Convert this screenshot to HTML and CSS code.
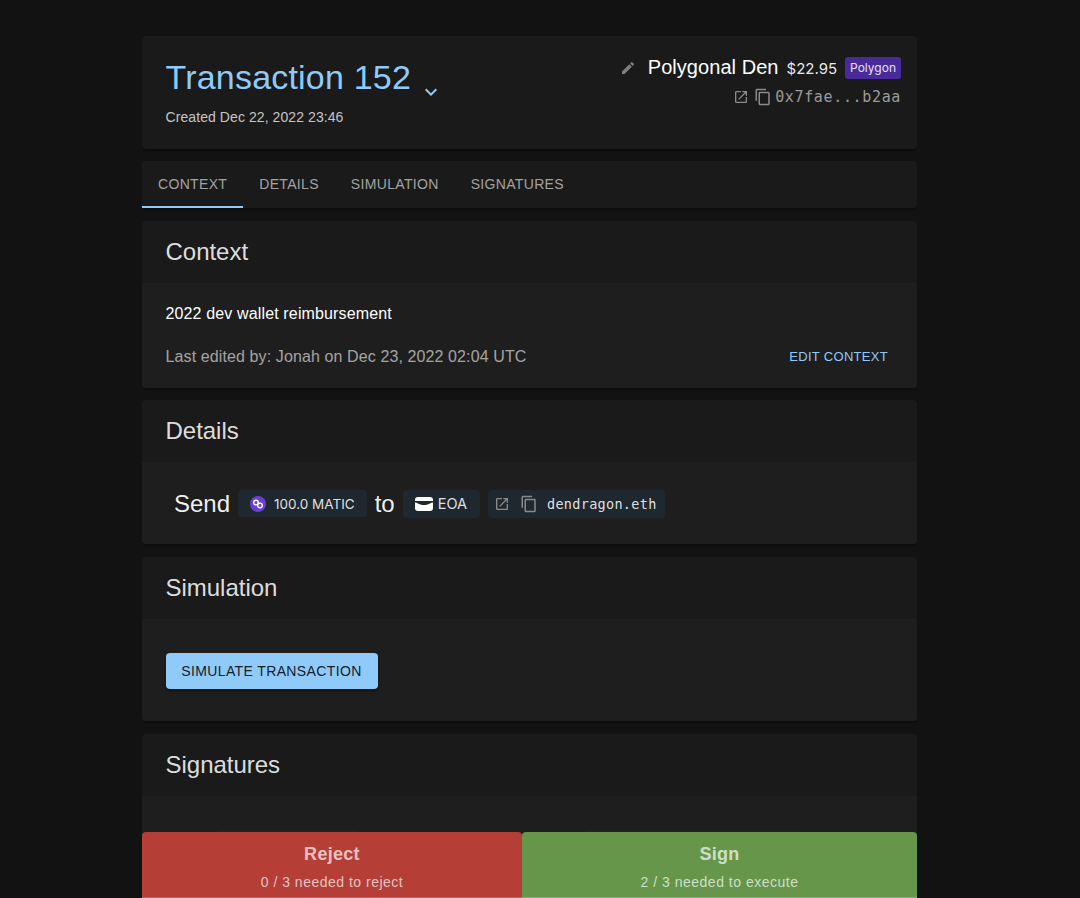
FILE: index.html
```html
<!DOCTYPE html>
<html lang="en">
<head>
<meta charset="utf-8">
<title>Transaction 152</title>
<link rel="stylesheet" href="styles.css">
</head>
<body>
<main class="page">
  <header class="card head">
    <div class="head-left">
      <div class="title-row">
        <h1 class="title">Transaction 152</h1>
        <svg class="chev" viewBox="0 0 24 24"><path d="M7.410 8.590 12 13.170l4.590-4.580L18 10l-6 6-6-6z"/></svg>
      </div>
      <p class="created">Created Dec 22, 2022 23:46</p>
    </div>
    <div class="head-right">
      <div class="acct-row">
        <svg class="pencil" viewBox="0 0 24 24"><path d="M3 17.250V21h3.750L17.810 9.940l-3.750-3.750L3 17.250zM20.710 7.040a1 1 0 0 0 0-1.410l-2.340-2.340a1 1 0 0 0-1.410 0l-1.830 1.830 3.750 3.750 1.830-1.830z"/></svg>
        <span class="acct-name">Polygonal Den</span>
        <span class="acct-usd">$22.95</span>
        <span class="chain">Polygon</span>
      </div>
      <div class="addr-row">
        <svg class="ico ico-open" viewBox="0 0 24 24"><path d="M19 19H5V5h7V3H5a2 2 0 0 0-2 2v14a2 2 0 0 0 2 2h14c1.100 0 2-.9 2-2v-7h-2v7zM14 3v2h3.590l-9.830 9.830 1.410 1.410L19 6.410V10h2V3h-7z"/></svg>
        <svg class="ico ico-copy" viewBox="0 0 24 24"><path d="M16 1H4c-1.100 0-2 .9-2 2v14h2V3h12V1zm3 4H8c-1.100 0-2 .9-2 2v14c0 1.100.9 2 2 2h11c1.100 0 2-.9 2-2V7c0-1.100-.9-2-2-2zm0 16H8V7h11v14z"/></svg>
        <span class="addr">0x7fae...b2aa</span>
      </div>
    </div>
  </header>

  <nav class="card tabs">
    <a class="tab tab-on">CONTEXT</a>
    <a class="tab">DETAILS</a>
    <a class="tab">SIMULATION</a>
    <a class="tab">SIGNATURES</a>
  </nav>

  <section class="card">
    <h2 class="sec-title">Context</h2>
    <div class="sec-body context-body">
      <p class="context-text">2022 dev wallet reimbursement</p>
      <div class="context-foot">
        <span class="edited">Last edited by: Jonah on Dec 23, 2022 02:04 UTC</span>
        <a class="edit-link">EDIT CONTEXT</a>
      </div>
    </div>
  </section>

  <section class="card">
    <h2 class="sec-title">Details</h2>
    <div class="sec-body details-body">
      <span class="word">Send</span>
      <span class="chip chip-matic">
        <svg class="matic" viewBox="0 0 16 16"><circle cx="8" cy="8" r="8" fill="#6a3fd0"/><g fill="none" stroke="#fff" stroke-width="1.400"><circle cx="6" cy="6.600" r="2.300"/><circle cx="10" cy="9.400" r="2.300"/></g></svg>
        100.0 MATIC
      </span>
      <span class="word">to</span>
      <span class="chip chip-eoa">
        <svg class="wallet" viewBox="0 0 18 16"><path fill="#fff" d="M3 1h12a3 3 0 0 1 3 3v1H0V4a3 3 0 0 1 3-3zM0 6.500c3 0 3.500 2.500 9 2.500s6-2.500 9-2.500V12a3 3 0 0 1-3 3H3a3 3 0 0 1-3-3z"/></svg>
        EOA
      </span>
      <span class="chip chip-addr">
        <svg class="ico ico-open" viewBox="0 0 24 24"><path d="M19 19H5V5h7V3H5a2 2 0 0 0-2 2v14a2 2 0 0 0 2 2h14c1.100 0 2-.9 2-2v-7h-2v7zM14 3v2h3.590l-9.830 9.830 1.410 1.410L19 6.410V10h2V3h-7z"/></svg>
        <svg class="ico ico-copy" viewBox="0 0 24 24"><path d="M16 1H4c-1.100 0-2 .9-2 2v14h2V3h12V1zm3 4H8c-1.100 0-2 .9-2 2v14c0 1.100.9 2 2 2h11c1.100 0 2-.9 2-2V7c0-1.100-.9-2-2-2zm0 16H8V7h11v14z"/></svg>
        <span class="mono-name">dendragon.eth</span>
      </span>
    </div>
  </section>

  <section class="card">
    <h2 class="sec-title">Simulation</h2>
    <div class="sec-body sim-body">
      <button class="sim-btn">SIMULATE TRANSACTION</button>
    </div>
  </section>

  <section class="card">
    <h2 class="sec-title">Signatures</h2>
    <div class="sec-body sig-body">
      <div class="sig-cell sig-cell-a"></div>
      <div class="sig-cell sig-cell-b"></div>
    </div>
  </section>

  <div class="action-bar">
    <button class="act act-reject"><strong>Reject</strong><span>0 / 3 needed to reject</span></button>
    <button class="act act-sign"><strong>Sign</strong><span>2 / 3 needed to execute</span></button>
  </div>
</main>
</body>
</html>
```
FILE: styles.css
```css
* { box-sizing: border-box; }
html, body { margin: 0; height: 898px; overflow: hidden; background: #121212; }
body { font-family: "Liberation Sans", Arial, sans-serif; color: #fff; }
p, h1, h2 { margin: 0; font-weight: 400; }
.page { width: 775px; margin-left: 142px; padding-top: 36px; display: flex; flex-direction: column; gap: 12.600px; position: relative; height: 898px; overflow: hidden; }
.card { background: #1a1a1a; border-radius: 4px; box-shadow: 0 2px 2px rgba(0,0,0,.25); flex: none; }
.head { height: 112.800px; padding: 21px 16px 0 23.500px; display: flex; justify-content: space-between; }
.title-row { display: flex; align-items: flex-start; }
.title { font-size: 34px; line-height: 40px; color: #90caf9; letter-spacing: .2px; }
.chev { width: 24px; height: 24px; fill: #90caf9; margin: 23px 0 0 8px; }
.created { font-size: 14px; line-height: 20px; margin-top: 3px; letter-spacing: .08px; color: rgba(255,255,255,.75); }
.head-right { display: flex; flex-direction: column; align-items: flex-end; }
.acct-row { display: flex; align-items: center; height: 22px; }
.pencil { width: 16px; height: 16px; fill: #7f7f7f; margin-right: 12px; }
.acct-name { font-size: 20px; margin: -1px 8px 0 0; letter-spacing: .05px; }
.acct-usd { font-family: Inter, sans-serif; font-size: 15px; margin-right: 8px; color: rgba(255,255,255,.92); }
.chain { font-family: Inter, sans-serif; background: #4a2a9a; border-radius: 3px; font-size: 12px; line-height: 22px; height: 22px; padding: 0 5px; color: #e8e2f5; }
.addr-row { display: flex; align-items: center; margin-top: 8px; height: 20px; }
.ico { width: 16px; height: 16px; fill: #8a8a8a; flex: none; }
.ico-copy { width: 18px; height: 18px; }
.addr-row .ico { margin-right: 3px; }
.addr-row .ico-open { margin-right: 5px; }
.addr { font-family: "DejaVu Sans Mono", monospace; font-size: 15px; color: #9a9a9a; letter-spacing: .65px; }
.tabs { height: 47px; display: flex; }
.tab { padding: 0 16px; font-size: 14px; line-height: 47px; letter-spacing: .33px; color: rgba(255,255,255,.6); }
.tab-on { box-shadow: inset 0 -2px 0 #90caf9; }
.sec-title { font-size: 24px; line-height: 62.800px; height: 63px; padding-left: 23.500px; letter-spacing: -.02px; color: rgba(255,255,255,.87); border-bottom: 1px solid #1f1f1f; }
.sec-body { background: #1e1e1e; border-radius: 0 0 4px 4px; }
.context-body { padding: 21px 29px 0 23.500px; height: 103.800px; }
.context-text { font-size: 16px; line-height: 18px; letter-spacing: .14px; }
.context-foot { display: flex; justify-content: space-between; align-items: center; margin-top: 24px; }
.edited { font-size: 16px; line-height: 20px; letter-spacing: .11px; color: rgba(255,255,255,.6); }
.edit-link { font-size: 13px; letter-spacing: .3px; margin-top: -1px; color: #90caf9; }
.details-body { height: 81px; padding: 0 32px; display: flex; align-items: center; gap: 8px; }
.word { font-size: 24px; color: rgba(255,255,255,.95); }
.chip { display: flex; align-items: center; background: #1f282e; border-radius: 4px; height: 27px; font-family: Inter, sans-serif; font-size: 14px; color: rgba(255,255,255,.87); }
.chip-matic { padding: 0 12px; gap: 8px; font-size: 13.500px; }
.matic { width: 16px; height: 16px; }
.chip-eoa { padding: 0 13px 0 12px; gap: 5px; height: 28px; font-size: 14.500px; }
.wallet { width: 18px; height: 16px; }
.chip-addr { padding: 0 8px 0 6px; gap: 10px; height: 28px; }
.mono-name { font-family: "DejaVu Sans Mono", monospace; font-size: 13.500px; letter-spacing: .3px; margin-left: -1px; }
.sim-body { height: 101px; padding: 33px 24px 0 23.500px; }
.sim-btn { display: block; width: 212px; height: 36px; border: 0; border-radius: 4px; background: #90caf9; color: #14202a; font: 400 14px "Liberation Sans", sans-serif; letter-spacing: .37px; box-shadow: 0 2px 3px rgba(0,0,0,.4); }
.sig-body { height: 200px; padding: 33px 115px 0 74px; display: flex; justify-content: space-between; }
.sig-cell { height: 40px; background: #222; border-radius: 4px; }
.sig-cell-a { width: 144px; }
.sig-cell-b { width: 218px; }
.action-bar { position: absolute; left: 0; right: 0; top: 832px; height: 66px; display: flex; }
.act { border: 0; border-radius: 4px 4px 0 0; display: flex; flex-direction: column; align-items: center; padding: 10px 0 0; font-family: "Liberation Sans", sans-serif; color: rgba(255,255,255,.7); box-shadow: inset 0 -1px 0 rgba(255,255,255,.2); }
.act strong { font-size: 18px; line-height: 24px; font-weight: 700; letter-spacing: .3px; }
.act span { font-size: 14px; line-height: 18px; margin-top: 7px; letter-spacing: .5px; }
.act-reject { width: 380px; background: #b53e36; }
.act-sign { width: 395px; background: #65964a; }
```
